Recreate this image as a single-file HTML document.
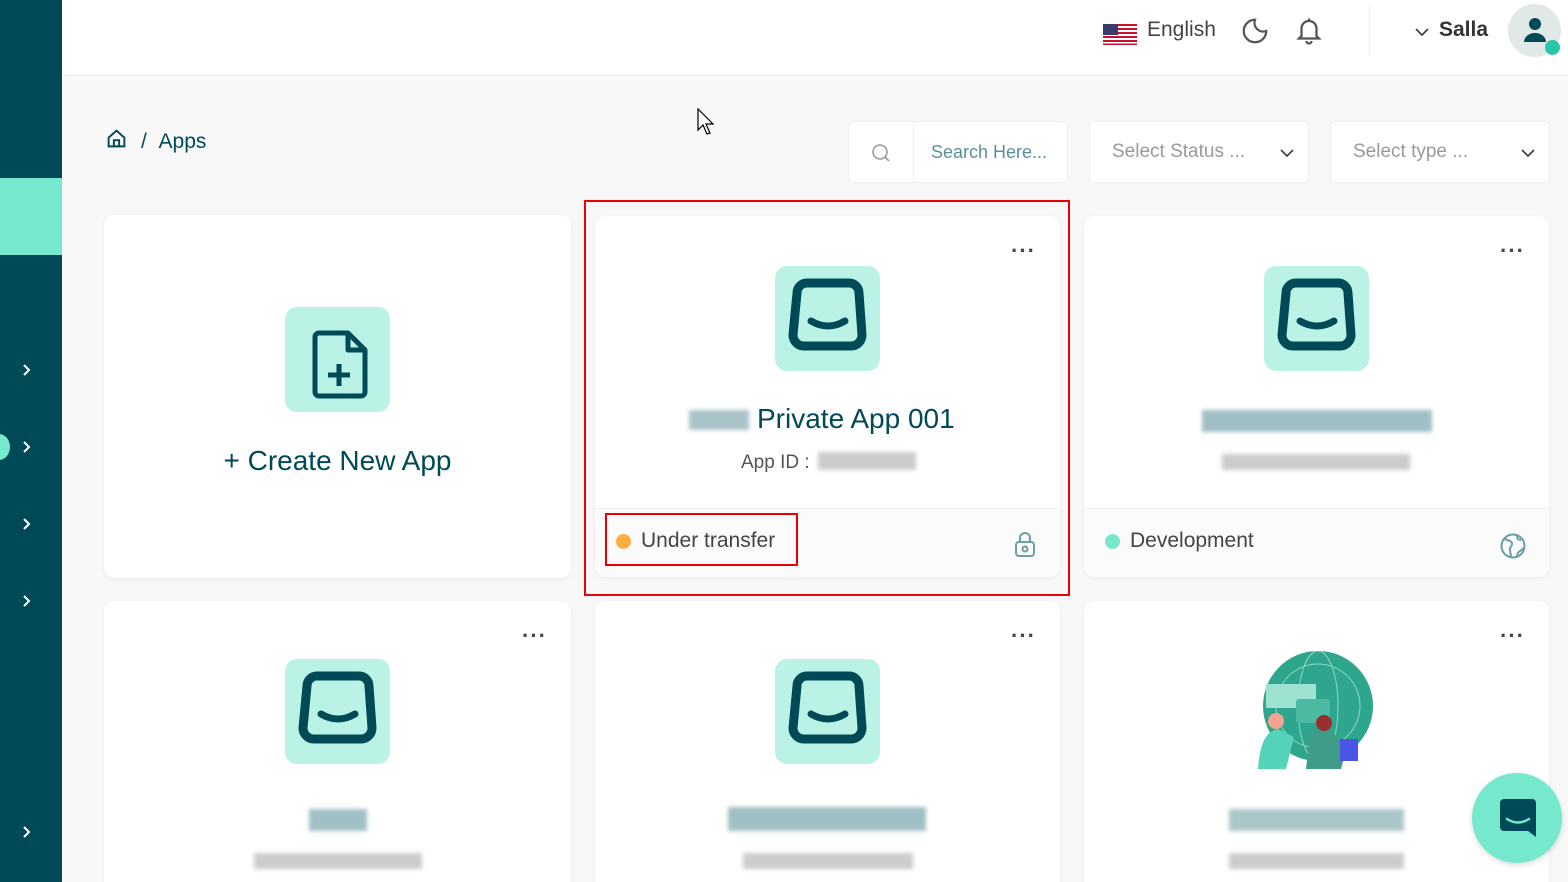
<!DOCTYPE html>
<html style="height:882px;overflow:hidden"><head><meta charset="utf-8"><style>
*{box-sizing:border-box;margin:0;padding:0}
html,body{height:882px;overflow:hidden}
body{width:1568px;background:#f8f8f8;font-family:"Liberation Sans",sans-serif;position:relative;color:#004956}
.side{position:absolute;left:0;top:0;width:62px;height:882px;background:#004956}
.side .act{position:absolute;left:0;top:178px;width:62px;height:77px;background:#76e8cd}
.chev{position:absolute;left:19px;width:14px;height:14px}
.top{position:absolute;left:62px;top:0;right:0;height:76px;background:#fff;border-bottom:1px solid #eee}
.card{position:absolute;background:#fff;border-radius:10px;box-shadow:0 1px 4px rgba(0,0,0,.06);overflow:hidden}
.foot{position:absolute;left:0;right:0;bottom:0;height:69px;background:#fbfbfb;border-top:1px solid #eee}
.ib{position:absolute;width:105px;height:105px;background:#baf3e6;border-radius:12px}
.dots{position:absolute;font-size:22px;color:#444;letter-spacing:1px;font-weight:bold;line-height:10px}
.blur{position:absolute;filter:blur(2px)}
.box{position:absolute;top:121px;height:62px;background:#fff;border:1px solid #eee;border-radius:5px;color:#999;font-size:19px}
</style></head><body>
<div class="side"><div class="act"></div>
<svg class="chev" style="top:363px" viewBox="0 0 14 14"><path d="M5 2l5 5-5 5" fill="none" stroke="#fff" stroke-width="2"/></svg>
<svg class="chev" style="top:440px" viewBox="0 0 14 14"><path d="M5 2l5 5-5 5" fill="none" stroke="#fff" stroke-width="2"/></svg>
<div style="position:absolute;left:-12px;top:434px;width:22px;height:26px;border-radius:50%;background:#76e8cd"></div>
<svg class="chev" style="top:517px" viewBox="0 0 14 14"><path d="M5 2l5 5-5 5" fill="none" stroke="#fff" stroke-width="2"/></svg>
<svg class="chev" style="top:594px" viewBox="0 0 14 14"><path d="M5 2l5 5-5 5" fill="none" stroke="#fff" stroke-width="2"/></svg>
<svg class="chev" style="top:825px" viewBox="0 0 14 14"><path d="M5 2l5 5-5 5" fill="none" stroke="#fff" stroke-width="2"/></svg>
</div>
<div class="top">
<svg style="position:absolute;left:1041px;top:24px" width="34" height="21" viewBox="0 0 34 21"><rect width="34" height="21" fill="#fff"/><g fill="#c8102e"><rect y="0" width="34" height="2"/><rect y="4" width="34" height="2"/><rect y="8" width="34" height="2"/><rect y="12" width="34" height="2"/><rect y="16" width="34" height="2"/><rect y="19.5" width="34" height="1.5"/></g><rect width="15" height="11" fill="#3c3b6e"/></svg>
<div style="position:absolute;left:1085px;top:18px;font-size:21px;color:#444">English</div>
<svg style="position:absolute;left:1178px;top:16px" width="30" height="30" viewBox="0 0 24 24"><path d="M12 3a7 7 0 0 0 9 9 9 9 0 1 1-9-9z" fill="none" stroke="#555" stroke-width="1.8"/></svg>
<svg style="position:absolute;left:1232px;top:16px" width="30" height="30" viewBox="0 0 24 24"><path d="M6 16V10a6 6 0 0 1 12 0v6l2 2H4zM10 20a2 2 0 0 0 4 0M12 2v2" fill="none" stroke="#555" stroke-width="1.8"/></svg>
<div style="position:absolute;left:1307px;top:5px;width:1px;height:50px;background:#eee"></div>
<svg style="position:absolute;left:1353px;top:26px" width="14" height="12" viewBox="0 0 14 12"><path d="M1 3l6 6 6-6" fill="none" stroke="#444" stroke-width="1.8"/></svg>
<div style="position:absolute;left:1377px;top:18px;font-size:21px;color:#333;font-weight:bold">Salla</div>
<div style="position:absolute;left:1446px;top:4px;width:53px;height:53px;border-radius:50%;background:#e0e8e8"></div>
<svg style="position:absolute;left:1459px;top:15px" width="28" height="28" viewBox="0 0 28 28"><circle cx="14" cy="9" r="6" fill="#004956"/><path d="M3 27a11 9 0 0 1 22 0z" fill="#004956"/></svg>
<div style="position:absolute;left:1483px;top:40px;width:15px;height:15px;border-radius:50%;background:#2ac5a8"></div>
</div>
<svg style="position:absolute;left:106px;top:128px" width="21" height="21" viewBox="0 0 24 24"><path d="M3 11l9-8 9 8v10H3zM9 21v-7h6v7" fill="none" stroke="#004956" stroke-width="2.2"/></svg>
<div style="position:absolute;left:141px;top:130px;font-size:21px;color:#004956">/ &nbsp;Apps</div>
<svg style="position:absolute;left:697px;top:108px" width="18" height="28" viewBox="0 0 18 28"><path d="M1 1v21l5-5 4 9 3-1-4-9h7z" fill="#fff" stroke="#000" stroke-width="1.2"/></svg>
<div class="box" style="left:848px;width:220px"><div style="position:absolute;left:64px;top:0;bottom:0;width:1px;background:#eee"></div>
<svg style="position:absolute;left:22px;top:21px" width="20" height="20" viewBox="0 0 20 20"><circle cx="9" cy="9" r="7" fill="none" stroke="#999" stroke-width="1.6"/><path d="M14 14l4 4" stroke="#999" stroke-width="1.6"/></svg>
<div style="position:absolute;left:82px;top:20px;font-size:18px;color:#5b9098">Search Here...</div></div>
<div class="box" style="left:1089px;width:220px"><div style="position:absolute;left:22px;top:19px">Select Status ...</div><svg style="position:absolute;left:190px;top:26px" width="14" height="10" viewBox="0 0 14 10"><path d="M1 2l6 6 6-6" fill="none" stroke="#444" stroke-width="1.8"/></svg></div>
<div class="box" style="left:1330px;width:220px"><div style="position:absolute;left:22px;top:19px">Select type ...</div><svg style="position:absolute;left:190px;top:26px" width="14" height="10" viewBox="0 0 14 10"><path d="M1 2l6 6 6-6" fill="none" stroke="#444" stroke-width="1.8"/></svg></div>

<div class="card" style="left:104px;top:215px;width:467px;height:363px">
<div class="ib" style="left:181px;top:92px"><svg width="105" height="105" viewBox="0 0 105 105"><path d="M34 26h29l17 17v42a4 4 0 0 1-4 4H34a4 4 0 0 1-4-4V30a4 4 0 0 1 4-4zM63 26v17h17M43 68h22M54 57v22" fill="none" stroke="#004956" stroke-width="5" stroke-linejoin="round"/></svg></div>
<div style="position:absolute;left:0;right:0;top:230px;text-align:center;font-size:28px;color:#004956">+ Create New App</div></div>

<svg width="0" height="0" style="position:absolute"><defs><g id="lg"><path d="M32 17h42a10 10 0 0 1 10 10l3 42a11 11 0 0 1-11 11H29a11 11 0 0 1-11-11l4-42a10 10 0 0 1 10-10z" fill="none" stroke="#004956" stroke-width="9"/><path d="M36 55q17 10 34 0" fill="none" stroke="#004956" stroke-width="7" stroke-linecap="round"/></g></defs></svg>

<div style="position:absolute;left:584px;top:200px;width:486px;height:396px;border:2px solid #e00"></div>
<div class="card" style="left:595px;top:216px;width:465px;height:361px">
<div class="dots" style="right:24px;top:30px">···</div>
<div class="ib" style="left:180px;top:50px"><svg width="105" height="105"><use href="#lg"/></svg></div>
<div class="blur" style="left:94px;top:194px;width:60px;height:20px;background:#a9c4c8"></div>
<div style="position:absolute;left:162px;top:187px;font-size:28px;color:#004956">Private App 001</div>
<div style="position:absolute;left:146px;top:236px;font-size:19px;color:#555">App ID :</div>
<div class="blur" style="left:223px;top:236px;width:98px;height:18px;background:#ccc"></div>
<div class="foot"><div style="position:absolute;left:21px;top:25px;width:15px;height:15px;border-radius:50%;background:#fdae42"></div>
<div style="position:absolute;left:46px;top:20px;font-size:21px;color:#444">Under transfer</div>
<svg style="position:absolute;left:418px;top:22px" width="24" height="28" viewBox="0 0 24 28"><rect x="3" y="11" width="18" height="14" rx="3" fill="none" stroke="#6a9fa5" stroke-width="2"/><path d="M7 11V7a5 5 0 0 1 10 0v4" fill="none" stroke="#6a9fa5" stroke-width="2"/><circle cx="12" cy="18" r="2.5" fill="none" stroke="#6a9fa5" stroke-width="2"/></svg></div></div>
<div style="position:absolute;left:605px;top:513px;width:193px;height:53px;border:2px solid #e00"></div>

<div class="card" style="left:1084px;top:216px;width:465px;height:361px">
<div class="dots" style="right:24px;top:30px">···</div>
<div class="ib" style="left:180px;top:50px"><svg width="105" height="105"><use href="#lg"/></svg></div>
<div class="blur" style="left:118px;top:194px;width:230px;height:22px;background:#9fbfc4"></div>
<div class="blur" style="left:138px;top:238px;width:188px;height:16px;background:#ccc"></div>
<div class="foot"><div style="position:absolute;left:21px;top:25px;width:15px;height:15px;border-radius:50%;background:#76e8cd"></div>
<div style="position:absolute;left:46px;top:20px;font-size:21px;color:#444">Development</div>
<svg style="position:absolute;left:416px;top:24px" width="26" height="26" viewBox="0 0 26 26"><circle cx="13" cy="13" r="11.5" fill="none" stroke="#6a9fa5" stroke-width="2"/><path d="M5 6c3 2 6 1 7 4s-3 4-2 7l1 7M17 24c0-3 1-5 3-6s3-3 4-3M17 3c0 3 2 4 4 4" fill="none" stroke="#6a9fa5" stroke-width="2"/></svg></div></div>

<div class="card" style="left:104px;top:601px;width:467px;height:300px">
<div class="dots" style="right:24px;top:30px">···</div>
<div class="ib" style="left:181px;top:58px"><svg width="105" height="105"><use href="#lg"/></svg></div>
<div class="blur" style="left:205px;top:208px;width:58px;height:22px;background:#9fbfc4"></div>
<div class="blur" style="left:150px;top:252px;width:168px;height:16px;background:#ccc"></div></div>
<div class="card" style="left:595px;top:601px;width:465px;height:300px">
<div class="dots" style="right:24px;top:30px">···</div>
<div class="ib" style="left:180px;top:58px"><svg width="105" height="105"><use href="#lg"/></svg></div>
<div class="blur" style="left:133px;top:206px;width:198px;height:24px;background:#9fbfc4"></div>
<div class="blur" style="left:148px;top:252px;width:170px;height:16px;background:#ccc"></div></div>
<div class="card" style="left:1084px;top:601px;width:465px;height:300px">
<div class="dots" style="right:24px;top:30px">···</div>
<svg style="position:absolute;left:172px;top:50px" width="120" height="122" viewBox="0 0 120 122"><circle cx="62" cy="55" r="55" fill="#2ea58d"/><circle cx="62" cy="55" r="42" fill="none" stroke="#8fd6c6" stroke-width="1"/><ellipse cx="62" cy="55" rx="20" ry="55" fill="none" stroke="#8fd6c6" stroke-width="1"/><rect x="10" y="33" width="50" height="24" fill="#9ee2d2"/><rect x="40" y="48" width="34" height="24" rx="3" fill="#4cb9a2"/><path d="M2 118c2-30 10-38 20-40l16 8-8 32z" fill="#55d3b8"/><circle cx="20" cy="70" r="8" fill="#f4a391"/><path d="M50 118l4-35 15-8 22 20-6 23z" fill="#3f9c88"/><rect x="84" y="88" width="18" height="22" fill="#4a55e8"/><circle cx="68" cy="72" r="8" fill="#9a2d2d"/></svg>
<div class="blur" style="left:145px;top:208px;width:175px;height:22px;background:#aac6ca"></div>
<div class="blur" style="left:145px;top:252px;width:175px;height:16px;background:#ccc"></div></div>

<div style="position:absolute;left:1472px;top:773px;width:90px;height:90px;border-radius:50%;background:#76e8cd;box-shadow:0 2px 6px rgba(0,0,0,.15)"></div>
<svg style="position:absolute;left:1500px;top:799px" width="36" height="38" viewBox="0 0 36 38"><path d="M4 0h28a4 4 0 0 1 4 4v34l-8-6H4a4 4 0 0 1-4-4V4a4 4 0 0 1 4-4z" fill="#004956"/><path d="M7 20q11 7 22 0" fill="none" stroke="#76e8cd" stroke-width="2.5" stroke-linecap="round"/></svg>
</body></html>
